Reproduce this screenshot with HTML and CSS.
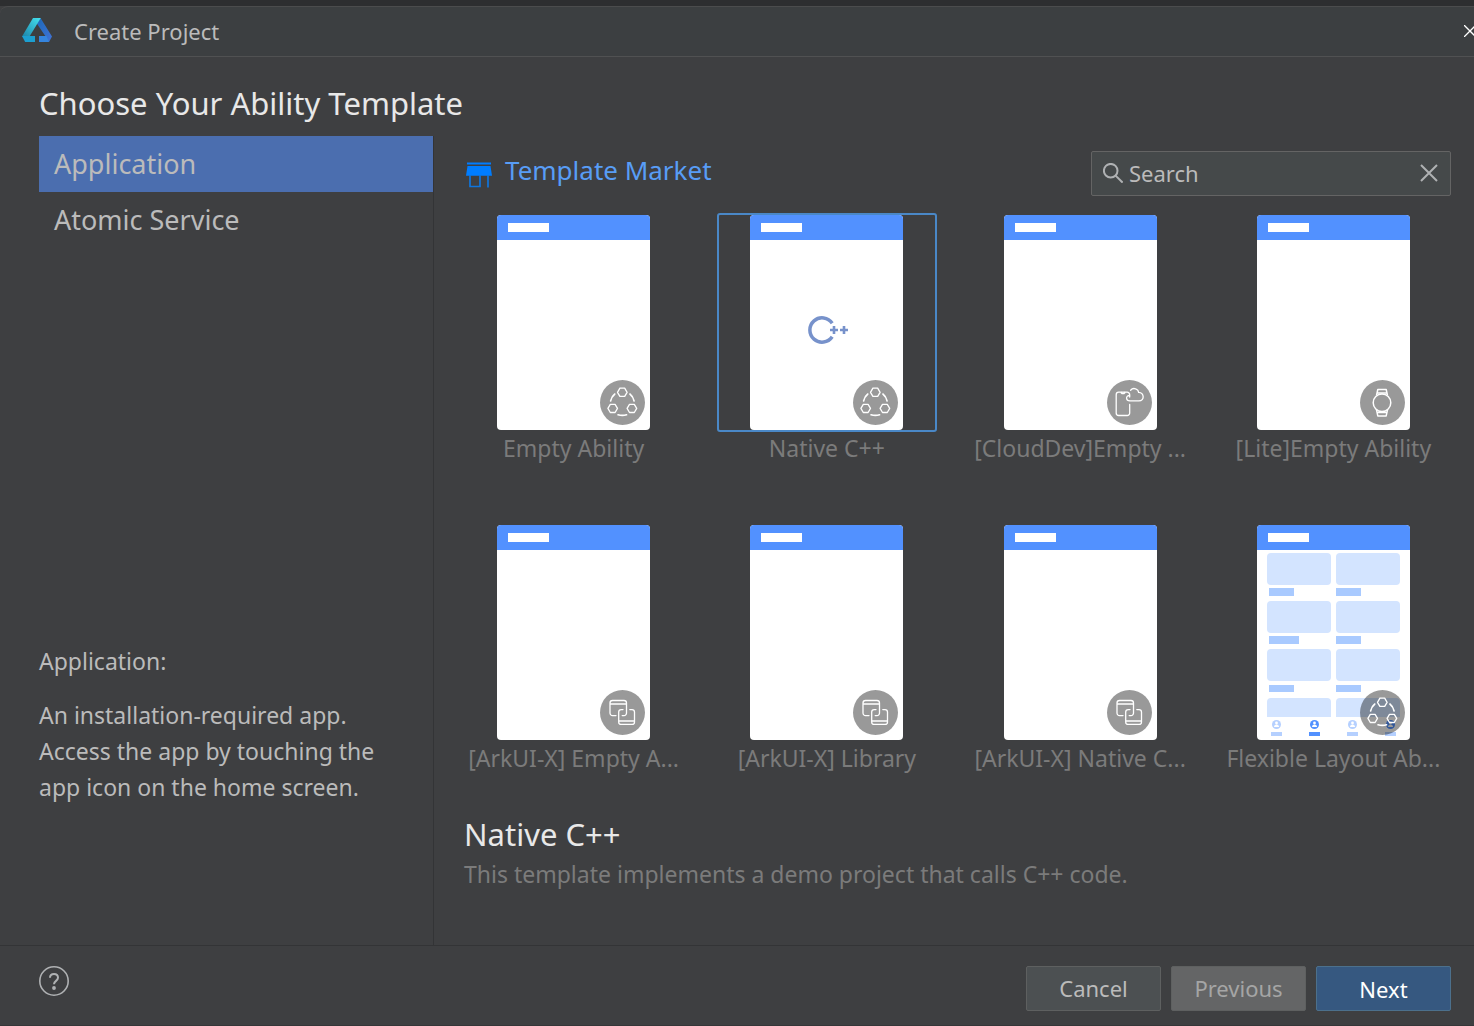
FILE: index.html
```
<!DOCTYPE html>
<html lang="en">
<head>
  <meta charset="utf-8">
  <title>Create Project</title>
  <link rel="stylesheet" href="styles.css">
</head>
<body>

  <!-- shared drawings -->
  <svg class="defs" aria-hidden="true">
    <symbol id="page" viewBox="0 0 153 215">
      <rect width="153" height="215" rx="4" fill="#fff"/>
      <path d="M0 25V4a4 4 0 0 1 4-4h145a4 4 0 0 1 4 4v21z" fill="#5291ff"/>
      <rect x="11" y="8" width="41" height="9" fill="#fff"/>
    </symbol>
    <symbol id="nodes" viewBox="0 0 45 45">
      <circle cx="22.5" cy="22.5" r="22.5" fill="#000" fill-opacity=".4"/>
      <g fill="none" stroke="#fff" stroke-width="1.3" stroke-linejoin="round" stroke-linecap="round">
        <path d="M17.5 12.3l2.4-4.1h4.8l2.4 4.1-2.4 4.1h-4.8z"/>
        <path d="M7.9 28.4l2.4-4.1h4.8l2.4 4.1-2.4 4.1h-4.8z"/>
        <path d="M27.1 28.4l2.4-4.1h4.8l2.4 4.1-2.4 4.1h-4.8z"/>
        <path d="M10.6 21q1-4.5 4.2-7M29.9 14q3.2 2.5 4.2 7M18 34.7q4.3 1.4 8.6 0" stroke-width="1.6"/>
      </g>
    </symbol>
    <symbol id="cross" viewBox="0 0 45 45">
      <circle cx="22.5" cy="22.5" r="22.5" fill="#000" fill-opacity=".4"/>
      <g fill="none" stroke="#fff" stroke-width="1.3" stroke-linecap="round">
        <path d="M16 25.6h-3.5a2.5 2.500 0 0 1-2.500-2.500V13a2.500 2.500 0 0 1 2.500-2.500H24a2.500 2.500 0 0 1 2.500 2.500v10.100a2.500 2.500 0 0 1-2.500 2.500h-1.800M10 14h16.500"/>
        <path d="M29.800 19.600h2.200a2.500 2.500 0 0 1 2.500 2.500v9.800a2.500 2.500 0 0 1-2.500 2.500H21.200a2.500 2.500 0 0 1-2.500-2.500v-9.800a2.500 2.500 0 0 1 2.500-2.500h1.800M18.700 31h15.800"/>
      </g>
    </symbol>
    <symbol id="cloud" viewBox="0 0 45 45">
      <circle cx="22.5" cy="22.5" r="22.5" fill="#000" fill-opacity=".4"/>
      <g fill="none" stroke="#fff" stroke-width="1.3" stroke-linecap="round">
        <path d="M22.700 24.500v8.500a2.500 2.500 0 0 1-2.500 2.500h-8.500a2.500 2.500 0 0 1-2.500-2.500V14.700a2.500 2.500 0 0 1 2.500-2.500h8.500a2.500 2.500 0 0 1 2.500 2.500V17"/>
        <path d="M14.200 12.600q1.800 1.900 3.600 0" stroke-width="1.600"/>
        <path d="M23.600 10.200c2.800-3.200 7.700-1.300 8 2.100 5.800.5 6.300 8.500.3 8.600h-9c-4.200 0-4.500-5.400-.4-5.400"/>
      </g>
    </symbol>
    <symbol id="watch" viewBox="0 0 45 45">
      <circle cx="22.5" cy="22.5" r="22.5" fill="#000" fill-opacity=".4"/>
      <g fill="none" stroke="#fff" stroke-width="1.5" stroke-linejoin="round">
        <circle cx="22" cy="22.7" r="8.8"/>
        <path d="M16.500 15.500l1.300-6h8.400l1.300 6M16.500 29.900l1.300 6h8.400l1.300-6M17 13h10M17 32.400h10"/>
      </g>
    </symbol>
    <symbol id="person" viewBox="0 0 9 9">
      <circle cx="4.5" cy="4.5" r="4.5" fill="currentColor"/>
      <circle cx="4.5" cy="3" r="1.4" fill="#fff"/>
      <path d="M2 7q0-2.600 2.500-2.600T7 7z" fill="#fff"/>
    </symbol>
  </svg>

  <header class="titlebar">
    <svg class="logo" viewBox="0 0 30 25" aria-hidden="true">
      <defs>
        <linearGradient id="g1" x1="1" y1="0" x2="0" y2="1"><stop offset="0" stop-color="#45e3f0"/><stop offset="1" stop-color="#1c83a8"/></linearGradient>
        <linearGradient id="g2" x1="0" y1="0" x2="1" y2="1"><stop offset="0" stop-color="#1c68b8"/><stop offset="1" stop-color="#4273d6"/></linearGradient>
      </defs>
      <path d="M18.500 0L30 18.500 27 24l-3-5L14.800 5.500z" fill="url(#g2)"/>
      <path d="M11 0h7.800L7.500 18.500H0z" fill="url(#g1)"/>
      <path d="M0 18h13v6H3.200z" fill="#1c9fd0"/>
      <path d="M17 18h7.500l2.700 6H17z" fill="#3585de"/>
    </svg>
    <span>Create Project</span>
    <button class="close" aria-label="Close">
      <svg viewBox="0 0 12 12"><path d="M0 0l12 12M12 0L0 12" stroke="#fff" stroke-width="1.3"/></svg>
    </button>
  </header>

  <h1>Choose Your Ability Template</h1>

  <main>
    <aside>
      <nav>
        <button class="kind active">Application</button>
        <button class="kind">Atomic Service</button>
      </nav>
      <div class="about">
        <p>Application:</p>
        <p>An installation-required app. Access the app by touching the app icon on the home screen.</p>
      </div>
    </aside>

    <section class="templates">
      <div class="toolbar">
        <a class="market" href="#">
          <svg viewBox="0 0 26 26" aria-hidden="true">
            <path d="M1 .5h24v2H1zM1.500 4h23L26 13.700H0z" fill="#007dff"/>
            <path d="M4 13v11.500h10V13M22 13v12.500" fill="none" stroke="#0f75dd" stroke-width="1.7"/>
          </svg>
          <span>Template Market</span>
        </a>
        <div class="search">
          <svg viewBox="0 0 20 20" aria-hidden="true"><circle cx="7.7" cy="7.7" r="6.8"/><path d="M12.600 12.600l7 7"/></svg>
          <input type="text" placeholder="Search" aria-label="Search">
          <button aria-label="Clear"><svg viewBox="0 0 18 18"><path d="M1 1l16 16M17 1L1 17"/></svg></button>
        </div>
      </div>

      <div class="grid">
        <button class="card">
          <span class="frame">
            <svg class="page">
              <use href="#page"/>
              <use href="#nodes" x="103" y="165" width="45" height="45"/>
            </svg>
          </span>
          <span class="name">Empty Ability</span>
        </button>
        <button class="card selected">
          <span class="frame">
            <svg class="page">
              <use href="#page"/>
              <path d="M82.200 108.200a12.200 12.200 0 1 0 0 13.600" fill="none" stroke="#7792cb" stroke-width="3.5"/>
              <path d="M80 115h8M84 111v8M90 115h8M94 111v8" fill="none" stroke="#7792cb" stroke-width="2.6"/>
              <use href="#nodes" x="103" y="165" width="45" height="45"/>
            </svg>
          </span>
          <span class="name">Native C++</span>
        </button>
        <button class="card">
          <span class="frame">
            <svg class="page">
              <use href="#page"/>
              <use href="#cloud" x="103" y="165" width="45" height="45"/>
            </svg>
          </span>
          <span class="name">[CloudDev]Empty ...</span>
        </button>
        <button class="card">
          <span class="frame">
            <svg class="page">
              <use href="#page"/>
              <use href="#watch" x="103" y="165" width="45" height="45"/>
            </svg>
          </span>
          <span class="name">[Lite]Empty Ability</span>
        </button>
        <button class="card">
          <span class="frame">
            <svg class="page">
              <use href="#page"/>
              <use href="#cross" x="103" y="165" width="45" height="45"/>
            </svg>
          </span>
          <span class="name">[ArkUI-X] Empty A...</span>
        </button>
        <button class="card">
          <span class="frame">
            <svg class="page">
              <use href="#page"/>
              <use href="#cross" x="103" y="165" width="45" height="45"/>
            </svg>
          </span>
          <span class="name">[ArkUI-X] Library</span>
        </button>
        <button class="card">
          <span class="frame">
            <svg class="page">
              <use href="#page"/>
              <use href="#cross" x="103" y="165" width="45" height="45"/>
            </svg>
          </span>
          <span class="name">[ArkUI-X] Native C...</span>
        </button>
        <button class="card">
          <span class="frame">
            <svg class="page">
              <use href="#page"/>
              <g fill="#d3e4ff">
                <rect x="10" y="28" width="64" height="32" rx="4"/><rect x="79" y="28" width="64" height="32" rx="4"/>
                <rect x="10" y="76" width="64" height="32" rx="4"/><rect x="79" y="76" width="64" height="32" rx="4"/>
                <rect x="10" y="124" width="64" height="32" rx="4"/><rect x="79" y="124" width="64" height="32" rx="4"/>
                <path d="M10 192v-15a4 4 0 0 1 4-4h56a4 4 0 0 1 4 4v15zM79 192v-15a4 4 0 0 1 4-4h56a4 4 0 0 1 4 4v15z"/>
              </g>
              <path d="M12 63h25v8H12zM79 63h25v8H79zM12 111h30v8H12zM79 111h25v8H79zM12 160h25v7H12zM79 160h25v7H79z" fill="#a9caff"/>
              <g color="#b5d0ff">
                <use href="#person" x="15" y="195" width="9" height="9"/>
                <use href="#person" x="91" y="195" width="9" height="9"/>
                <path d="M14 207h11v4H14zM90 207h11v4H90zM128 207h11v4h-11z" fill="currentColor"/>
              </g>
              <g color="#5291ff">
                <use href="#person" x="53" y="195" width="9" height="9"/>
                <use href="#person" x="129" y="195" width="9" height="9"/>
                <path d="M52 207h11v4H52z" fill="currentColor"/>
              </g>
              <use href="#nodes" x="103" y="165" width="45" height="45"/>
            </svg>
          </span>
          <span class="name">Flexible Layout Ab...</span>
        </button>
      </div>

      <div class="detail">
        <h2>Native C++</h2>
        <p>This template implements a demo project that calls C++ code.</p>
      </div>
    </section>
  </main>

  <footer>
    <button class="help" aria-label="Help">
      <svg viewBox="0 0 30 30">
        <circle cx="15" cy="15" r="14.2" stroke-width="1.6"/>
        <path d="M11 11.800c0-5 8-5 8 0 0 3-4 3.200-4 6.400" stroke-width="2"/>
        <circle cx="15" cy="22" r=".9" stroke-width="2"/>
      </svg>
    </button>
    <button class="btn">Cancel</button>
    <button class="btn" disabled>Previous</button>
    <button class="btn primary">Next</button>
  </footer>

</body>
</html>
```
FILE: styles.css
```
* {
  box-sizing: border-box;
}
body {
  margin: 0;
  min-height: 100vh;
  display: flex;
  flex-direction: column;
  background: #3e3f41;
  border-top: 6px solid #2d2e30;
  border-bottom: 1px solid #353638;
  color: #bbb;
  font-family: "Noto Sans", "Open Sans", sans-serif;
  font-size: 22px;
  overflow-x: hidden;
}
h1, h2, p {
  margin: 0;
  font-weight: normal;
}
button {
  padding: 0;
  border: 0;
  background: none;
  color: inherit;
  font: inherit;
}
svg {
  display: block;
}
.defs {
  position: absolute;
  width: 0;
  height: 0;
}

/* title bar */
.titlebar {
  display: flex;
  align-items: center;
  height: 51px;
  padding: 0 0 2px 22px;
  background: #3c3f41;
  border-top: 1px solid #4b4c4d;
  border-bottom: 1px solid #505152;
  border-top-left-radius: 8px;
}
.logo {
  width: 30px;
  height: 25px;
  margin-right: 22px;
}
.close {
  margin-left: auto;
  margin-right: -2px;
}
.close svg {
  width: 12px;
  height: 12px;
}

h1 {
  padding: 25px 39px 12px;
  color: #e8e8e8;
  font-size: 31px;
  line-height: 42px;
}

main {
  flex: 1;
  display: flex;
}
aside {
  width: 434px;
  flex: none;
  display: flex;
  flex-direction: column;
  justify-content: space-between;
  padding-left: 39px;
  border-right: 1px solid #333436;
}
.kind {
  display: block;
  width: 100%;
  height: 56px;
  padding: 0 0 2px 15px;
  font-size: 27px;
  text-align: left;
}
.kind.active {
  background: #4b6eaf;
}
.about {
  padding: 0 40px 140px 0;
  font-size: 23px;
  line-height: 36px;
}
.about p + p {
  margin-top: 18px;
}

.templates {
  flex: 1;
  min-width: 0;
}
.toolbar {
  display: flex;
  align-items: flex-start;
  justify-content: space-between;
  padding: 15px 23px 0 32px;
}
.market {
  display: flex;
  align-items: center;
  gap: 13px;
  color: #589df6;
  font-size: 26px;
  line-height: 38px;
  text-decoration: none;
}
.market svg {
  width: 26px;
  height: 26px;
  margin-top: 10px;
}
.search {
  display: flex;
  align-items: center;
  width: 360px;
  height: 45px;
  padding: 0 12px 2px 11px;
  background: #45494a;
  border: 1px solid #646464;
  border-radius: 2px;
}
.search svg {
  width: 20px;
  height: 20px;
  fill: none;
  stroke: #afb1b3;
  stroke-width: 2;
}
.search button svg {
  width: 18px;
  height: 18px;
}
.search input {
  flex: 1;
  min-width: 0;
  padding: 0 6px;
  border: 0;
  outline: 0;
  background: none;
  color: #bbb;
  font: inherit;
}
.search input::placeholder {
  color: #bbb;
}

/* template cards */
.grid {
  display: grid;
  grid-template-columns: repeat(4, 1fr);
  row-gap: 58px;
  padding: 17px 14px 0 13px;
}
.card {
  display: flex;
  flex-direction: column;
  align-items: center;
  min-width: 0;
}
.frame {
  display: flex;
  justify-content: center;
  width: 220px;
  height: 219px;
  border: 2px solid transparent;
  border-radius: 3px;
}
.selected .frame {
  border-color: #4a88c7;
}
.page {
  width: 153px;
  height: 215px;
}
.name {
  color: #7b7b7b;
  font-size: 23px;
  line-height: 33px;
  white-space: nowrap;
}

.detail {
  padding: 38px 30px 0;
}
.detail h2 {
  color: #e8e8e8;
  font-size: 31px;
  line-height: 42px;
}
.detail p {
  color: #7b7b7b;
  font-size: 23px;
  line-height: 38px;
}

footer {
  display: flex;
  align-items: center;
  gap: 10px;
  height: 80px;
  padding: 6px 23px 0 39px;
  border-top: 1px solid #333436;
}
.help {
  margin: -16px auto 0 0;
}
.help svg {
  width: 30px;
  height: 30px;
  fill: none;
  stroke: #afb1b3;
}
.btn {
  width: 135px;
  height: 45px;
  padding-bottom: 2px;
  background: #4c5052;
  border: 1px solid #5e6060;
  border-radius: 2px;
}
.btn:disabled {
  background: #646566;
  color: #a5a5a5;
}
.btn.primary {
  padding-bottom: 0;
  background: #365880;
  border-color: #4c708c;
  color: #fff;
}
```
